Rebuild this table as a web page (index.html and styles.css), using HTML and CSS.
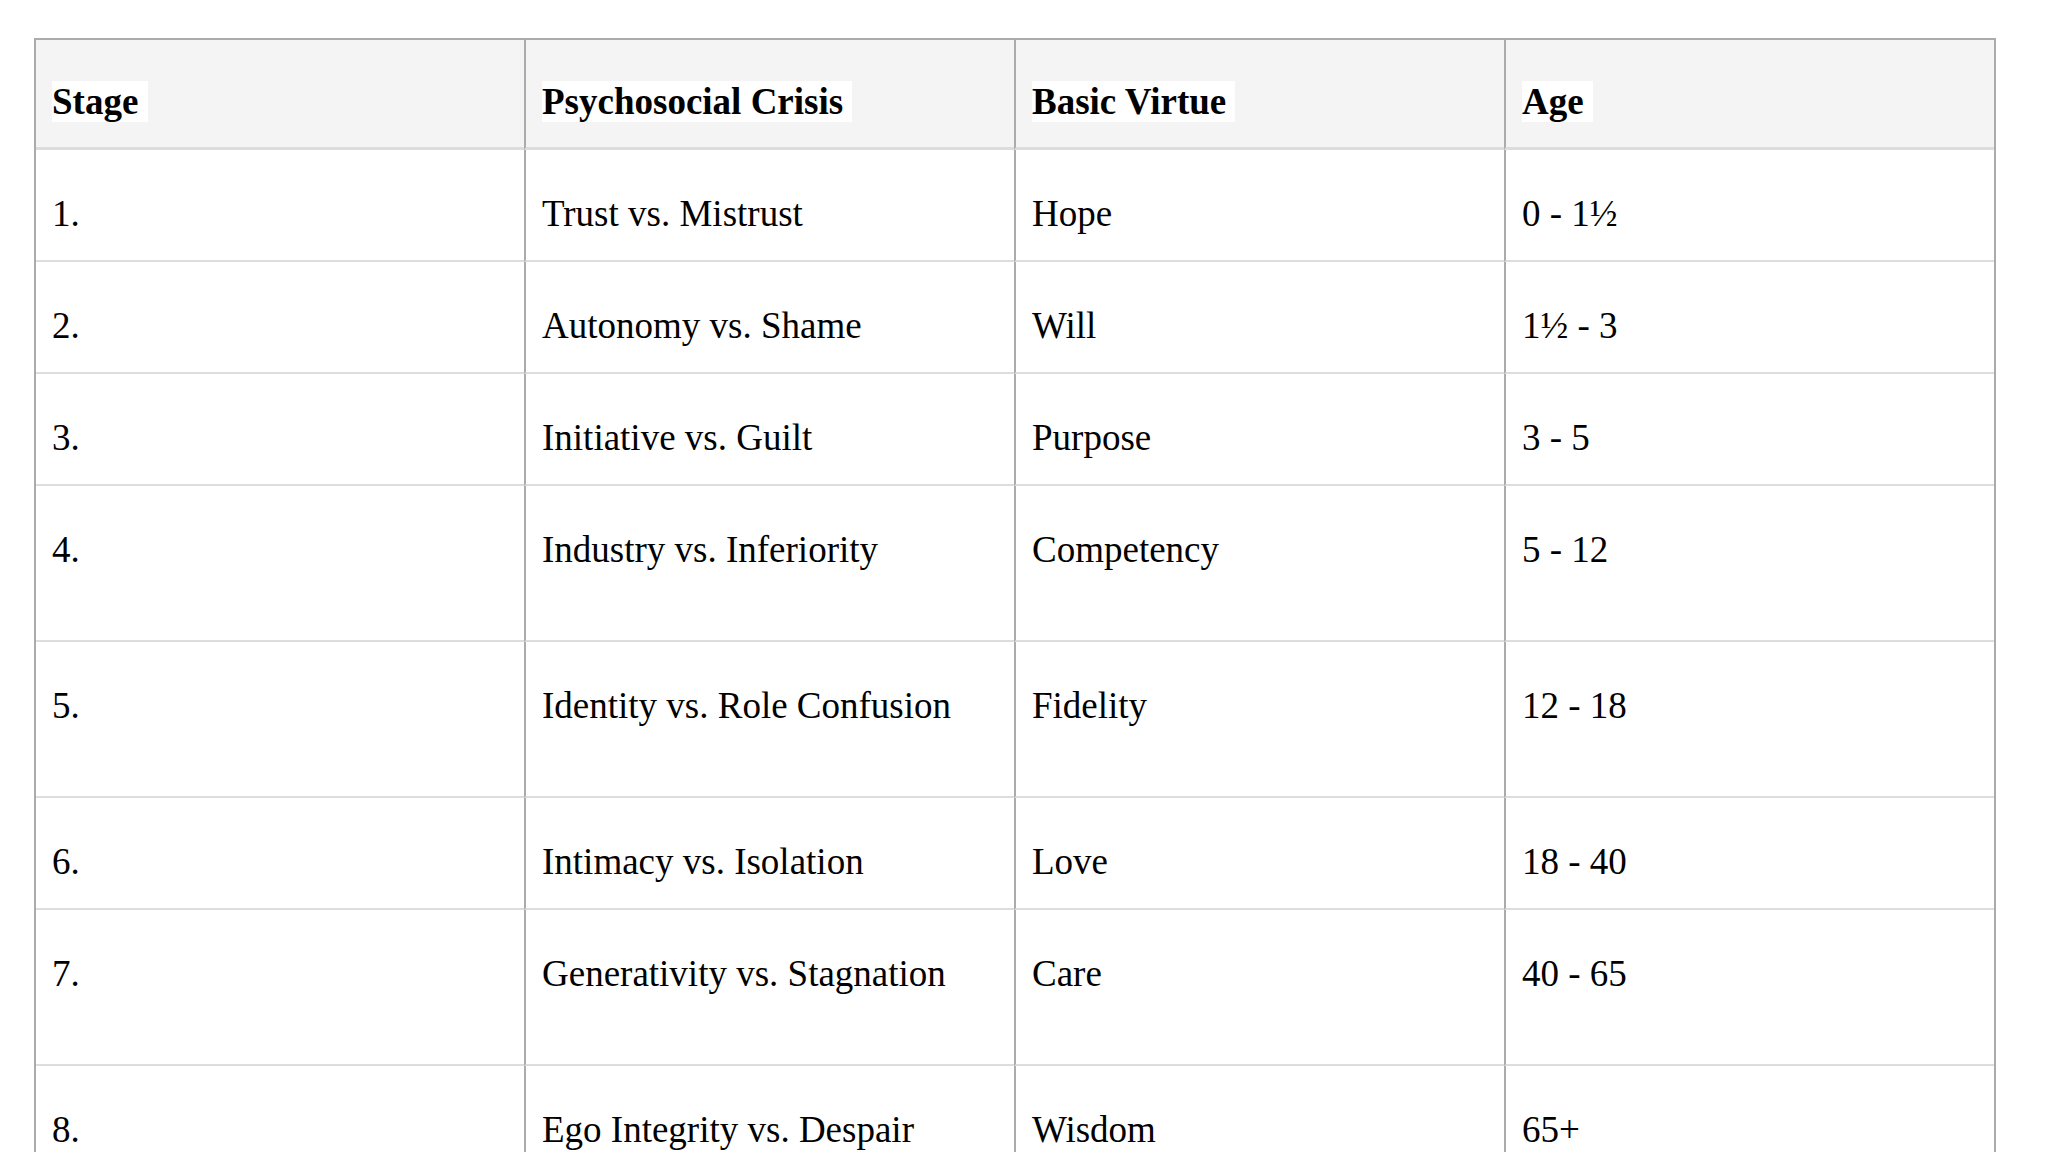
FILE: index.html
```html
<!DOCTYPE html>
<html lang="en">
<head>
<meta charset="utf-8">
<title>Erikson's Stages</title>
<link rel="stylesheet" href="styles.css">
</head>
<body>
<div class="wrap">
  <table class="stages">
    <colgroup>
      <col class="c1"><col class="c2"><col class="c3"><col class="c4">
    </colgroup>
    <thead>
      <tr>
        <th><span class="hl">Stage </span></th>
        <th><span class="hl">Psychosocial Crisis </span></th>
        <th><span class="hl">Basic Virtue </span></th>
        <th><span class="hl">Age </span></th>
      </tr>
    </thead>
    <tbody>
      <tr><td>1.</td><td>Trust vs. Mistrust</td><td>Hope</td><td>0 - 1½</td></tr>
      <tr><td>2.</td><td>Autonomy vs. Shame</td><td>Will</td><td>1½ - 3</td></tr>
      <tr><td>3.</td><td>Initiative vs. Guilt</td><td>Purpose</td><td>3 - 5</td></tr>
      <tr class="tall"><td>4.</td><td>Industry vs. Inferiority</td><td>Competency</td><td>5 - 12</td></tr>
      <tr class="tall"><td>5.</td><td>Identity vs. Role Confusion</td><td>Fidelity</td><td>12 - 18</td></tr>
      <tr><td>6.</td><td>Intimacy vs. Isolation</td><td>Love</td><td>18 - 40</td></tr>
      <tr class="tall"><td>7.</td><td>Generativity vs. Stagnation</td><td>Care</td><td>40 - 65</td></tr>
      <tr class="tall last"><td>8.</td><td>Ego Integrity vs. Despair</td><td>Wisdom</td><td>65+</td></tr>
    </tbody>
  </table>
</div>
</body>
</html>
```

FILE: styles.css
```css
html, body {
  margin: 0;
  padding: 0;
  background: #ffffff;
}

body {
  font-family: "Liberation Serif", "Times New Roman", serif;
  color: #000000;
  overflow: hidden;
}

.wrap {
  padding: 38px 0 0 34px;
}

.stages {
  width: 1962px;
  table-layout: fixed;
  border-collapse: separate;
  border-spacing: 0;
  border: 2px solid #ababab;
  font-size: 37px;
  line-height: 40px;
}

.stages .c1 {
  width: 488px;
}

.stages .c2,
.stages .c3,
.stages .c4 {
  width: 490px;
}

.stages th,
.stages td {
  text-align: left;
  vertical-align: top;
  padding: 44px 16px 26px 16px;
  border-left: 2px solid #ababab;
  border-bottom: 2px solid #dddddd;
  white-space: nowrap;
}

.stages th:first-child,
.stages td:first-child {
  border-left: 0;
}

.stages thead th {
  background: #f4f4f4;
  font-weight: bold;
  padding-top: 42px;
  padding-bottom: 25px;
  border-bottom: 3px solid #dcdcdc;
}

.hl {
  background: #ffffff;
  white-space: pre;
}

.stages td {
  font-weight: normal;
}

.stages tr.tall td {
  padding-bottom: 70px;
}

.stages tr.last td {
  border-bottom: 0;
}
```
